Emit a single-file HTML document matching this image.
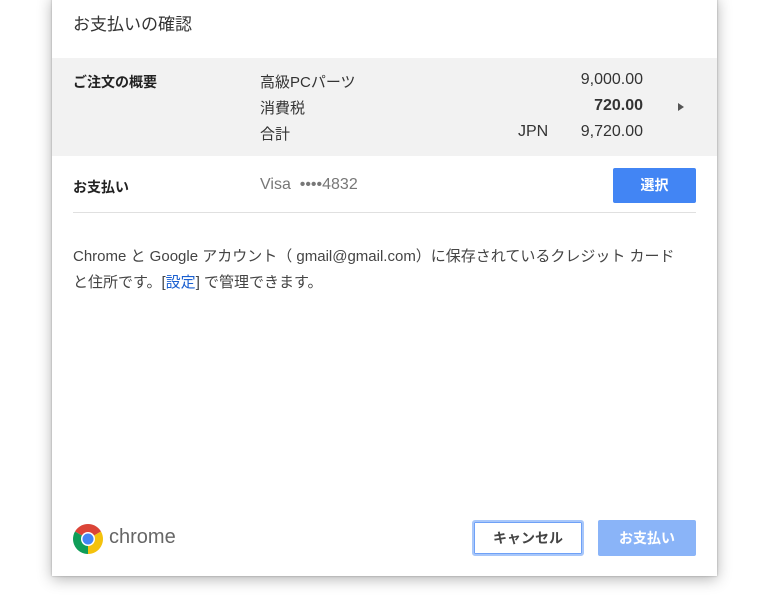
<!DOCTYPE html>
<html><head><meta charset="utf-8"><style>
body{margin:0;width:768px;height:604px;background:#fff;font-family:"Liberation Sans","Noto Sans CJK JP",sans-serif;position:relative;overflow:hidden;color:#333}
.dlg{position:absolute;left:52px;top:-4px;width:665px;height:580px;background:#fff;box-shadow:0 3px 14px rgba(0,0,0,.3),0 0 2px rgba(0,0,0,.3)}
.a{position:absolute;white-space:nowrap}
.gray{position:absolute;left:0;top:62px;width:665px;height:98px;background:#f2f2f2}
.b{font-weight:bold;font-size:14px;color:#222}
.t{font-size:15px;color:#333}
.n{font-size:16px}
.r{text-align:right}
</style></head><body>
<div class="dlg">
<div class="a" style="left:21px;top:14px;font-size:17px;color:#333">お支払いの確認</div>
<div class="gray"></div>
<div class="a b" style="left:21px;top:76px">ご注文の概要</div>
<div class="a t" style="left:208px;top:75px">高級PCパーツ</div>
<div class="a t" style="left:208px;top:101px">消費税</div>
<div class="a t" style="left:208px;top:127px">合計</div>
<div class="a t n r" style="left:450px;width:141px;top:75px">9,000.00</div>
<div class="a t n r" style="left:450px;width:141px;top:101px;font-weight:bold">720.00</div>
<div class="a t n r" style="left:450px;width:141px;top:127px">9,720.00</div>
<div class="a t n" style="left:466px;top:127px">JPN</div>
<div class="a" style="left:626px;top:107px;width:0;height:0;border-left:6px solid #555;border-top:4.5px solid transparent;border-bottom:4.5px solid transparent"></div>
<div class="a b" style="left:21px;top:181px">お支払い</div>
<div class="a t n" style="left:208px;top:180px;color:#777">Visa &nbsp;••••4832</div>
<div class="a" style="left:561px;top:172px;width:83px;height:35px;background:#4285f4;border-radius:2px;color:#fff;font-weight:bold;font-size:14px;text-align:center;line-height:35px">選択</div>
<div class="a" style="left:21px;top:216px;width:623px;height:1px;background:#e0e0e0"></div>
<div class="a" style="left:21px;top:248px;font-size:15px;line-height:26px;color:#444">Chrome と Google アカウント（ gmail@gmail.com）に保存されているクレジット カード<br>と住所です。[<span style="color:#1a5fd0">設定</span>] で管理できます。</div>
<svg class="a" style="left:21px;top:528px" width="30" height="30" viewBox="-15 -15 30 30">
<path d="M0 0 L-12.99 -7.5 A15 15 0 0 1 12.99 -7.5 Z" fill="#db4437"/>
<path d="M0 0 L12.99 -7.5 A15 15 0 0 1 0 15 Z" fill="#f4c20d"/>
<path d="M0 0 L0 15 A15 15 0 0 1 -12.99 -7.5 Z" fill="#0f9d58"/>
<circle r="7" fill="#fff"/><circle r="5.5" fill="#4285f4"/></svg>
<div class="a" style="left:57px;top:530px;font-size:20px;color:#666">chrome</div>
<div class="a" style="left:420px;top:524px;width:108px;height:32px;border:2px solid #a8c7fa;border-radius:3px;box-shadow:inset 0 0 0 1px #6fa1f7;background:#fff;text-align:center;line-height:32px;font-size:14px;font-weight:bold;color:#444">キャンセル</div>
<div class="a" style="left:546px;top:524px;width:98px;height:36px;background:#8ab4f8;border-radius:2px;text-align:center;line-height:36px;font-size:14px;font-weight:bold;color:#fff">お支払い</div>
</div>
</body></html>
